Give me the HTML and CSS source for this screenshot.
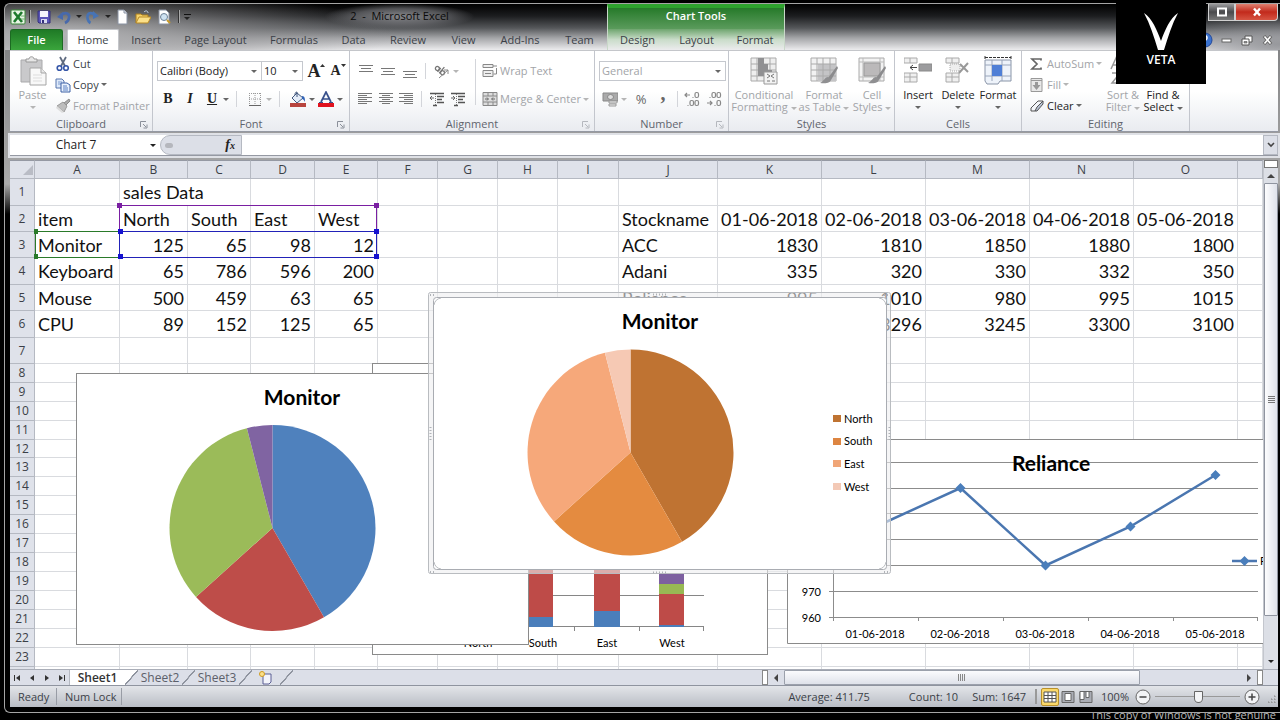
FILE: index.html
```html
<!DOCTYPE html>
<html lang="en">
<head>
<meta charset="utf-8">
<title>2 - Microsoft Excel</title>
<link rel="stylesheet" href="styles.css">
</head>
<body>
<div class="window">
  <header class="titlebar">
    <div class="qat">
      <svg class="i16" viewBox="0 0 16 16"><rect x="1" y="1" width="14" height="14" rx="1" fill="#e9f5e6" stroke="#3b8a3b"/><path d="M4 3l8 10M12 3L4 13" stroke="#1d7a2c" stroke-width="2.6"/><path d="M11 7h4M11 10h4" stroke="#6ab06a"/></svg>
      <span class="bar"></span>
      <button aria-label="Save"><svg class="i16" viewBox="0 0 16 16"><path d="M2 2h12v12H3l-1-1z" fill="#5a55b8" stroke="#34307c"/><path d="M4 2h8v6H4z" fill="#f4f5fc"/><path d="M5 10h6v4H5z" fill="#d8daf0"/><path d="M6 11h2v3H6z" fill="#34307c"/></svg></button>
      <button class="wide" aria-label="Undo"><svg class="i16" viewBox="0 0 16 16"><path d="M5 6c5-4 9-1 8 3-.3 2-2 4-4 5" fill="none" stroke="#4869ab" stroke-width="2.6"/><path d="M1 8l6-5v8z" fill="#4869ab"/></svg><i class="arr dark"></i></button>
      <button class="wide" aria-label="Redo"><svg class="i16" viewBox="0 0 16 16"><path d="M10 6C5 2 2 5 2.500 9c.3 2 1 4 3 5" fill="none" stroke="#4773b4" stroke-width="2.600"/><path d="M14 7L8 2v8z" fill="#4773b4"/></svg><i class="arr dark"></i></button>
      <button aria-label="New"><svg class="i16" viewBox="0 0 16 16"><path d="M4 1h6l3 3v11H4z" fill="#fff" stroke="#8a93a3"/><path d="M10 1v3h3" fill="#dfe4ec" stroke="#8a93a3"/></svg></button>
      <button aria-label="Open"><svg class="i16" viewBox="0 0 16 16"><path d="M1 14V5h5l1 1h6v3" fill="#f5d26b" stroke="#a97c1c"/><path d="M1 14l3-6h12l-3 6z" fill="#fbe08a" stroke="#b98a25"/><path d="M9 3c2-2 4-1 4 1" fill="none" stroke="#c5d6ee"/></svg></button>
      <button aria-label="Print Preview"><svg class="i16" viewBox="0 0 16 16"><path d="M3 1h7l3 3v11H3z" fill="#fff" stroke="#8a93a3"/><circle cx="8" cy="8" r="3.500" fill="#cfe3f2" stroke="#6d8196"/><path d="M11 11l3 3" stroke="#c79a2a" stroke-width="2"/></svg></button>
      <span class="bar"></span>
      <button class="more" aria-label="Customize"><i class="line"></i><i class="arr dark"></i></button>
    </div>
    <h1>2  -  Microsoft Excel</h1>
    <div class="context">Chart Tools</div>
    <div class="winbtns">
      <button aria-label="Restore"><svg viewBox="0 0 14 10"><path d="M3 1.500h8v7H3z" fill="none" stroke="#fff" stroke-width="2"/></svg></button>
      <button class="close" aria-label="Close"><svg viewBox="0 0 14 10"><path d="M4 1.500l6 7M10 1.500l-6 7" stroke="#fff" stroke-width="2.400"/></svg></button>
    </div>
  </header>

  <nav class="tabs">
    <div class="main-tabs">
      <button class="file">File</button><button class="home">Home</button><button>Insert</button><button>Page Layout</button><button>Formulas</button><button>Data</button><button>Review</button><button>View</button><button>Add-Ins</button><button>Team</button>
    </div>
    <div class="context-tabs"><button>Design</button><button>Layout</button><button>Format</button></div>
    <div class="mdi">
      <button aria-label="Help"><svg class="i16" viewBox="0 0 16 16"><circle cx="8" cy="8" r="7" fill="#3a72cf" stroke="#23489a"/><path d="M6 6c0-3 4-3 4 0 0 2-2 1.500-2 4M8 11v2" stroke="#fff" fill="none" stroke-width="1.500"/></svg></button>
      <button aria-label="Minimize workbook"><svg class="i16" viewBox="0 0 16 16"><rect x="4" y="7" width="9" height="3" fill="#fff" stroke="#666"/></svg></button>
      <button aria-label="Restore workbook"><svg class="i16" viewBox="0 0 16 16"><path d="M6 4h7v6H6z" fill="#fff" stroke="#555"/><path d="M3 7h7v6H3z" fill="#fff" stroke="#555"/><path d="M5 9.500h3v1.500H5z" fill="#999" stroke="#555" stroke-width=".6"/></svg></button>
      <button aria-label="Close workbook"><svg class="i16" viewBox="0 0 16 16"><path d="M4 4l7 8M11 4l-7 8" stroke="#666" stroke-width="3.400"/><path d="M4.500 4.500l6 7M10.500 4.500l-6 7" stroke="#fff" stroke-width="1.600"/></svg></button>
    </div>
  </nav>

  <div class="ribbon">
    <section class="group clipboard">
      <div class="body">
        <button class="big off"><svg viewBox="0 0 28 30"><path d="M2 4h21v22H2z" fill="#c9c9cb" stroke="#a9a9ab"/><path d="M7 6V3h3c0-3 5-3 5 0h3v3z" fill="#e6e6e6" stroke="#999"/><path d="M11 12h11l5 5v12H11z" fill="#f8f8f8" stroke="#a5a5a5"/><path d="M22 12v5h5" fill="#e8e8e8" stroke="#a5a5a5"/><path d="M14 19h9M14 22h9M14 25h9" stroke="#ddd"/></svg><span>Paste</span><i class="arr"></i></button>
        <div class="stack">
          <button><svg class="i16" viewBox="0 0 16 16"><path d="M5 1l5 9M11 1L6 10" stroke="#5f6b80" stroke-width="1.800"/><circle cx="4.500" cy="12" r="2.300" fill="none" stroke="#3556a8" stroke-width="1.600"/><circle cx="11" cy="12" r="2.300" fill="none" stroke="#3556a8" stroke-width="1.600"/></svg>Cut</button>
          <button><svg class="i16" viewBox="0 0 16 16"><path d="M1 2h6l2 2v7H1z" fill="#dfeafa" stroke="#5674ad"/><path d="M3 5h4M3 7h4" stroke="#7d9bd0"/><path d="M6 6h6l3 2v7H6z" fill="#e9f1fc" stroke="#3d60a5"/><path d="M8 9h4M8 11h5M8 13h5" stroke="#5b80c4"/></svg>Copy <i class="arr"></i></button>
          <button class="off"><svg class="i16" viewBox="0 0 16 16"><path d="M14 1l1 2-4 4-2-2z" fill="#aaa" stroke="#8d8d8d"/><path d="M8 4l4 4-3 6-7-6z" fill="#bdbdbd" stroke="#999"/><path d="M2 8l7 6-2 1-6-5z" fill="#ddd"/></svg>Format Painter</button>
        </div>
      </div>
      <h2>Clipboard<svg class="launch" viewBox="0 0 8 8"><path d="M.5 6V.5H6M3 3l3 3M7 3.500V7H3.500" fill="none" stroke="#8b909a"/></svg></h2>
    </section>

    <section class="group font">
      <div class="body rows">
        <div class="row">
          <button class="combo fname"><span>Calibri (Body)</span><i class="arr"></i></button><button class="combo fsize"><span>10</span><i class="arr"></i></button>
          <button class="tool grow"><b class="serif big-a">A</b><svg class="tick" viewBox="0 0 5 4"><path d="M0 3l2.500-3L5 3z" fill="#333"/></svg></button><button class="tool shrink"><b class="serif small-a">A</b><svg class="tick" viewBox="0 0 5 4"><path d="M0 0l2.500 3L5 0z" fill="#333"/></svg></button>
        </div>
        <div class="row">
          <button class="tool"><b class="serif">B</b></button><button class="tool"><b class="serif"><em>I</em></b></button><button class="tool"><b class="serif under">U</b></button><i class="arr"></i>
          <span class="sep"></span>
          <button class="tool bord off"><svg class="i16" viewBox="0 0 16 16"><path d="M2 2.500h12M2 8h12M2.500 2v12M8 2v12M13.500 2v12" stroke="#999" stroke-dasharray="1 1"/><path d="M2 14.500h12" stroke="#666"/></svg></button><i class="arr pale"></i>
          <span class="sep"></span>
          <button class="tool"><svg class="i16" viewBox="0 0 16 16"><path d="M7 2l6 5-6 5-5-5z" fill="#e4ecf8" stroke="#43597f"/><path d="M7 6V1c-2 0-2 2-2 3" fill="none" stroke="#43597f"/><path d="M12 5c3 0 3 3 3 6-1-2-2-3-3-3z" fill="#2f62b5"/><path d="M0 12h16v4H0z" fill="#b8453f"/></svg></button><i class="arr"></i>
          <button class="tool"><svg class="i16" viewBox="0 0 16 16"><path d="M3 11L8 1l5 10M5 8h6" fill="none" stroke="#39518c" stroke-width="1.700"/><path d="M1 11.500h4M11 11.500h4" stroke="#39518c"/><path d="M0 12h16v4H0z" fill="#e0121e"/></svg></button><i class="arr"></i>
        </div>
      </div>
      <h2>Font<svg class="launch" viewBox="0 0 8 8"><path d="M.5 6V.5H6M3 3l3 3M7 3.500V7H3.500" fill="none" stroke="#8b909a"/></svg></h2>
    </section>

    <section class="group align">
      <div class="body">
        <div class="rows">
          <div class="row">
            <button class="tool"><svg class="i16" viewBox="0 0 16 16"><path d="M1 2.500h14M3 5.500h10M1 8.500h14" stroke="#777"/></svg></button><button class="tool"><svg class="i16" viewBox="0 0 16 16"><path d="M1 5.500h14M3 8.500h10M1 11.500h14" stroke="#777"/></svg></button><button class="tool"><svg class="i16" viewBox="0 0 16 16"><path d="M1 8.500h14M3 11.500h10M1 14.500h14" stroke="#777"/></svg></button>
            <span class="sep"></span>
            <button class="tool off"><svg class="i16" viewBox="0 0 16 16"><g transform="rotate(40 6 7)" fill="none" stroke="#777" stroke-width="1.300"><circle cx="3" cy="7.500" r="2"/><path d="M5.300 5v5M7.500 2v8"/><circle cx="9.700" cy="7.500" r="2"/></g><path d="M5 15L14 7M10 7h4v4" fill="none" stroke="#888"/></svg></button><i class="arr pale"></i>
          </div>
          <div class="row">
            <button class="tool"><svg class="i16" viewBox="0 0 16 16"><path d="M1 2.500h14M1 4.500h9M1 6.500h14M1 8.500h9M1 10.500h14M1 12.500h9" stroke="#777"/></svg></button><button class="tool"><svg class="i16" viewBox="0 0 16 16"><path d="M1 2.500h14M4 4.500h8M1 6.500h14M4 8.500h8M1 10.500h14M4 12.500h8" stroke="#777"/></svg></button><button class="tool"><svg class="i16" viewBox="0 0 16 16"><path d="M1 2.500h14M6 4.500h9M1 6.500h14M6 8.500h9M1 10.500h14M6 12.500h9" stroke="#777"/></svg></button>
            <span class="sep"></span>
            <button class="tool"><svg class="i16" viewBox="0 0 16 16"><path d="M1 2.500h14M8 5.500h7M8 8.500h5M8 11.500h7M4 14.500h4" stroke="#555" stroke-width="1.500"/><path d="M6.500 3v12" stroke="#777" stroke-dasharray="1 1"/><path d="M5 7H1M3 5L1 7l2 2" fill="none" stroke="#666"/></svg></button><button class="tool"><svg class="i16" viewBox="0 0 16 16"><path d="M1 2.500h14M8 5.500h7M8 8.500h5M8 11.500h7M4 14.500h4" stroke="#555" stroke-width="1.500"/><path d="M6.500 3v12" stroke="#777" stroke-dasharray="1 1"/><path d="M1 7h4M3 5l2 2-2 2" fill="none" stroke="#666"/></svg></button>
          </div>
        </div>
        <span class="sep tall"></span>
        <div class="rows">
          <button class="row wide-tool off"><svg class="i16" viewBox="0 0 16 16"><path d="M1 1.500h10v3H1zM1 7.500h10v6H1z" fill="#eee" stroke="#888"/><path d="M3 10.500h6M11 3h4M14.500 5v6h-3" stroke="#888" fill="none"/></svg>Wrap Text</button>
          <button class="row wide-tool off"><svg class="i16" viewBox="0 0 16 16"><path d="M1 1.500h14v13H1zM1 5h14M1 11h14M6 1.500V5M11 1.500V5M6 11v3.500M11 11v3.500" fill="#ddd" stroke="#888"/><path d="M3 8h3M13 8h-3M5 6.500L6.500 8 5 9.500M11 6.500L9.500 8 11 9.500" stroke="#666" fill="none"/></svg>Merge &amp; Center <i class="arr pale"></i></button>
        </div>
      </div>
      <h2>Alignment<svg class="launch" viewBox="0 0 8 8"><path d="M.5 6V.5H6M3 3l3 3M7 3.500V7H3.500" fill="none" stroke="#b5b8be"/></svg></h2>
    </section>

    <section class="group number">
      <div class="body rows">
        <div class="row"><button class="combo format off"><span>General</span><i class="arr"></i></button></div>
        <div class="row">
          <button class="tool"><svg class="i16" viewBox="0 0 16 16"><path d="M1 2h15v8H1z" fill="#aaa" stroke="#888"/><ellipse cx="8.500" cy="6" rx="3" ry="2.500" fill="#ddd" stroke="#888"/><path d="M7 10h8v2H7zM7 13h7v2H7z" fill="#eee" stroke="#999"/></svg></button><i class="arr pale"></i>
          <button class="tool pct">%</button><button class="tool comma">,</button><span class="sep"></span>
          <button class="tool dec"><svg class="i16" viewBox="0 0 16 16"><g fill="none" stroke="#888" stroke-width="1.200"><rect x="11" y="1.500" width="3.500" height="5" rx="1.500"/><rect x="6" y="9.500" width="3.500" height="5" rx="1.500"/><rect x="11" y="9.500" width="3.500" height="5" rx="1.500"/><path d="M8.500 6.500h1M3.500 14.500h1M1 4h5M3 2L1 4l2 2"/></g></svg></button><button class="tool dec"><svg class="i16" viewBox="0 0 16 16"><g fill="none" stroke="#888" stroke-width="1.200"><rect x="6" y="1.500" width="3.500" height="5" rx="1.500"/><rect x="11" y="1.500" width="3.500" height="5" rx="1.500"/><rect x="11" y="9.500" width="3.500" height="5" rx="1.500"/><path d="M3.500 6.500h1M8.500 14.500h1M1 12h5M4 10l2 2-2 2"/></g></svg></button>
        </div>
      </div>
      <h2>Number<svg class="launch" viewBox="0 0 8 8"><path d="M.5 6V.5H6M3 3l3 3M7 3.500V7H3.500" fill="none" stroke="#b5b8be"/></svg></h2>
    </section>

    <section class="group styles">
      <div class="body">
        <button class="big off w68"><svg viewBox="0 0 28 30"><path d="M1 2h25v23H1z" fill="#eee" stroke="#aaa"/><path d="M1 8h25M1 14h25M1 20h25M7 2v23M20 2v23" stroke="#aaa"/><path d="M8 2h6v6h4v6h4v6H8z" fill="#909092"/><path d="M14 16h13v12H14z" fill="#f3f3f3" stroke="#999"/><path d="M17 18l3 2-3 2M24 18l-3 2 3 2M17 25h3M22 25h3" fill="none" stroke="#777"/></svg><span>Conditional<br>Formatting <i class="arr pale"></i></span></button>
        <button class="big off w52"><svg viewBox="0 0 28 30"><path d="M1 2h25v23H1z" fill="#f2f2f2" stroke="#aaa"/><path d="M8 8h18v17H8z" fill="#c4c4c6"/><path d="M1 8h25M1 14h25M1 20h25M7 2v23M13 2v23M20 2v23" stroke="#aaa"/><path d="M27 10l-9 12 3 2 7-12z" fill="#8b8b8d"/><path d="M18 21c-3 0-3 3-8 6 6 1 11 0 11-4z" fill="#8f8f91"/></svg><span>Format<br>as Table <i class="arr pale"></i></span></button>
        <button class="big off w44"><svg viewBox="0 0 28 30"><path d="M1 2h25v23H1z" fill="#f2f2f2" stroke="#aaa"/><path d="M1 6h25M1 21h25M5 2v23M22 2v23" stroke="#bbb"/><path d="M6 7h16v13H6z" fill="#bbb9ba" stroke="#999"/><path d="M27 10l-9 12 3 2 7-12z" fill="#8b8b8d"/><path d="M18 21c-3 0-3 3-8 6 6 1 11 0 11-4z" fill="#8f8f91"/></svg><span>Cell<br>Styles <i class="arr pale"></i></span></button>
      </div>
      <h2>Styles</h2>
    </section>

    <section class="group cells">
      <div class="body">
        <button class="big w40"><svg viewBox="0 0 28 30"><path d="M0 2h13v5H0zM0 17h13v9H0zM6 2v5M6 17v9M0 21h13" fill="#f0f0f0" stroke="#aaa"/><path d="M15 8h13v7H15z" fill="#9c9c9e" stroke="#8a8a8a"/><path d="M13 11.500H6M9 9l-3 2.500L9 14" fill="none" stroke="#444"/></svg><span>Insert</span><i class="arr"></i></button>
        <button class="big w40"><svg viewBox="0 0 28 30"><path d="M2 2h13v5H2zM2 17h13v9H2zM8 2v5M8 17v9M2 21h13" fill="#f0f0f0" stroke="#aaa"/><path d="M6 8h10v7H6z" fill="#eee" stroke="#aaa" stroke-dasharray="1 1"/><path d="M16 8l8 8M24 7l-9 10" stroke="#999" stroke-width="2"/></svg><span>Delete</span><i class="arr"></i></button>
        <button class="big w40"><svg viewBox="0 0 28 30"><path d="M1 4h26v21H16l-2 3H3l-2-3z" fill="#eef3fa" stroke="#8a95a8"/><path d="M1 9h26M1 20h26M8 4v21M18 4v21" stroke="#9aa6bb"/><path d="M8 9h10v11H8z" fill="#4f7fd6"/><path d="M1 1.500h26M1 0v4M27 0v4" stroke="#333" stroke-dasharray="3 1"/></svg><span>Format</span><i class="arr"></i></button>
      </div>
      <h2>Cells</h2>
    </section>

    <section class="group editing">
      <div class="body">
        <div class="stack">
          <button class="off"><svg class="i16" viewBox="0 0 16 16"><path d="M12 4.500V3H3l5 5-5 5h9v-1.500" fill="none" stroke="#666" stroke-width="1.700"/></svg>AutoSum <i class="arr pale"></i></button>
          <button class="off"><svg class="i16" viewBox="0 0 16 16"><path d="M2 1.500h11v13H2z" fill="#e8e8e8" stroke="#999"/><path d="M6 5h3v3h2.500l-4 5-4-5H6z" fill="#999"/><path d="M2 3.500h11" stroke="#999"/></svg>Fill <i class="arr pale"></i></button>
          <button><svg class="i16" viewBox="0 0 16 16"><path d="M2 10L9 3h5l-6 8-2 2H2z" fill="#f4f6fa" stroke="#555"/><path d="M6 13l2-4 6-6v3l-6 7z" fill="#b9c3d6" stroke="#555"/></svg>Clear <i class="arr"></i></button>
        </div>
        <button class="big off w40"><svg viewBox="0 0 28 30"><path d="M2 13L7 2l5 11M4 9h6M3 17h8L3 27h9" fill="none" stroke="#999" stroke-width="1.500"/><path d="M15 4h12l-4 8v10h-3V12z" fill="#ccc" stroke="#999"/></svg><span>Sort &amp;<br>Filter <i class="arr pale"></i></span></button>
        <button class="big w40"><svg viewBox="0 0 28 30"><path d="M4 4h8v20H4zM16 4h8v20h-8zM12 8h4v8h-4z" fill="#4a5a78"/></svg><span>Find &amp;<br>Select <i class="arr"></i></span></button>
      </div>
      <h2>Editing</h2>
    </section>
  </div>

  <div class="formula">
    <button class="namebox"><span>Chart 7</span><i class="arr dark"></i></button>
    <div class="fx"><i class="knob"></i><em>f<small>x</small></em></div>
    <input class="finput" type="text" aria-label="Formula bar">
    <button class="expand" aria-label="Expand formula bar"><svg viewBox="0 0 10 8"><path d="M2 2l3 3 3-3" fill="none" stroke="#444" stroke-width="1.600"/></svg></button>
  </div>

  <div class="work">
    <main class="sheet">
      <table>
        <colgroup><col class="c-head"><col class="c-a"><col class="c-b"><col class="c-c"><col class="c-d"><col class="c-c"><col class="c-f"><col class="c-f"><col class="c-f"><col class="c-i"><col class="c-j"><col class="c-k"><col class="c-k"><col class="c-k"><col class="c-k"><col class="c-k"><col></colgroup>
        <thead><tr><th class="corner"><svg viewBox="0 0 12 12"><path d="M11 1v10H1z" fill="#b9bcc5"/></svg></th><th>A<th>B<th>C<th>D<th>E<th>F<th>G<th>H<th>I<th>J<th>K<th>L<th>M<th>N<th>O<th></tr></thead>
        <tbody>
          <tr class="t27"><th>1<td><td colspan="2">sales Data<td><td><td><td> <td><td><td><td> <td><td><td><td> <td></tr>
          <tr class="t26"><th>2<td>item<td>North<td>South<td>East<td>West<td><td><td><td><td>Stockname<td class="n">01-06-2018<td class="n">02-06-2018<td class="n">03-06-2018<td class="n">04-06-2018<td class="n">05-06-2018<td></tr>
          <tr class="t26"><th>3<td>Monitor<td class="n">125<td class="n">65<td class="n">98<td class="n">12<td><td><td><td><td>ACC<td class="n">1830<td class="n">1810<td class="n">1850<td class="n">1880<td class="n">1800<td></tr>
          <tr class="t27"><th>4<td>Keyboard<td class="n">65<td class="n">786<td class="n">596<td class="n">200<td><td><td><td><td>Adani<td class="n">335<td class="n">320<td class="n">330<td class="n">332<td class="n">350<td></tr>
          <tr class="t26"><th>5<td>Mouse<td class="n">500<td class="n">459<td class="n">63<td class="n">65<td><td><td><td><td>Reliance<td class="n">995<td class="n">1010<td class="n">980<td class="n">995<td class="n">1015<td></tr>
          <tr class="t27"><th>6<td>CPU<td class="n">89<td class="n">152<td class="n">125<td class="n">65<td><td><td><td><td><td><td class="n">3296<td class="n">3245<td class="n">3300<td class="n">3100<td></tr>
          <tr class="t26"><th>7<td><td><td><td> <td><td><td><td> <td><td><td><td> <td><td><td><td></tr>
          <tr><th>8<td><td><td><td> <td><td><td><td> <td><td><td><td> <td><td><td><td></tr>
          <tr><th>9<td><td><td><td> <td><td><td><td> <td><td><td><td> <td><td><td><td></tr>
          <tr><th>10<td><td><td><td> <td><td><td><td> <td><td><td><td> <td><td><td><td></tr>
          <tr><th>11<td><td><td><td> <td><td><td><td> <td><td><td><td> <td><td><td><td></tr>
          <tr class="t18"><th>12<td><td><td><td> <td><td><td><td> <td><td><td><td> <td><td><td><td></tr>
          <tr><th>13<td><td><td><td> <td><td><td><td> <td><td><td><td> <td><td><td><td></tr>
          <tr><th>14<td><td><td><td> <td><td><td><td> <td><td><td><td> <td><td><td><td></tr>
          <tr><th>15<td><td><td><td> <td><td><td><td> <td><td><td><td> <td><td><td><td></tr>
          <tr><th>16<td><td><td><td> <td><td><td><td> <td><td><td><td> <td><td><td><td></tr>
          <tr><th>17<td><td><td><td> <td><td><td><td> <td><td><td><td> <td><td><td><td></tr>
          <tr><th>18<td><td><td><td> <td><td><td><td> <td><td><td><td> <td><td><td><td></tr>
          <tr><th>19<td><td><td><td> <td><td><td><td> <td><td><td><td> <td><td><td><td></tr>
          <tr><th>20<td><td><td><td> <td><td><td><td> <td><td><td><td> <td><td><td><td></tr>
          <tr><th>21<td><td><td><td> <td><td><td><td> <td><td><td><td> <td><td><td><td></tr>
          <tr><th>22<td><td><td><td> <td><td><td><td> <td><td><td><td> <td><td><td><td></tr>
          <tr><th>23<td><td><td><td> <td><td><td><td> <td><td><td><td> <td><td><td><td></tr>
          <tr><th><td><td><td><td> <td><td><td><td> <td><td><td><td> <td><td><td><td></tr>
        </tbody>
      </table>

      <svg class="float ranges" viewBox="32 200 350 62">
        <path d="M119.500 205.500H376.500V231.500" fill="none" stroke="#7a1fa2"/><path d="M119.500 205.500v26" stroke="#7a1fa2"/>
        <path d="M35.500 231.500h84M35.500 257.500h84M35.500 231v26" stroke="#2a7a2a"/>
        <path d="M119.500 231.500h257v26h-257z" fill="none" stroke="#2222b8"/>
        <path d="M117 203h5v5h-5zM374 203h5v5h-5z" fill="#7a1fa2"/>
        <path d="M34 229h4v5h-4zM34 254h4v5h-4z" fill="#2a7a2a"/>
        <path d="M118 229h5v5h-5zM374 229h5v5h-5zM118 254h5v5h-5zM374 254h5v5h-5z" fill="#1512d0"/>
      </svg>

      <svg class="float chart-bars" viewBox="372 363 396 292">
        <rect x="372.500" y="363.500" width="395" height="291" fill="#fff" stroke="#8a8a8a"/>
        <path d="M440 595.500h264M440 626.500h264M574.500 626v5M639.500 626v5M703.500 626v5" stroke="#868686"/>
        <path d="M527 500h26v117h-26zM594 500h26v111h-26zM659 594h25v31h-25z" fill="#be4b48"/>
        <path d="M527 617h26v10h-26zM594 611h26v16h-26zM659 625h25v2h-25z" fill="#4a7ebb"/>
        <path d="M659 584h25v10h-25z" fill="#98b954"/><path d="M659 573h25v11h-25z" fill="#7d60a0"/>
        <text x="478" y="647" text-anchor="middle">North</text><text x="543" y="647" text-anchor="middle">South</text><text x="607" y="647" text-anchor="middle">East</text><text x="672" y="647" text-anchor="middle">West</text>
      </svg>

      <svg class="float chart-pie" viewBox="76 373 454 272">
        <rect x="76.500" y="373.500" width="452" height="271" fill="#fff" stroke="#8a8a8a"/>
        <text class="ctitle" x="302" y="405" text-anchor="middle">Monitor</text>
        <g transform="translate(272.500 528)"><path d="M0 0V-103A103 103 0 0 1 51.500 89.200z" fill="#4f81bd"/><path d="M0 0L51.500 89.200A103 103 0 0 1-76.500 68.900z" fill="#be4d49"/><path d="M0 0L-76.500 68.900A103 103 0 0 1-25.600-99.800z" fill="#9bbb59"/><path d="M0 0L-25.600-99.800A103 103 0 0 1 0-103z" fill="#8064a2"/></g>
      </svg>

      <svg class="float chart-line" viewBox="787 439 476 205">
        <path d="M1270 439.500H787.500v204H1270z" fill="#fff" stroke="#8a8a8a"/>
        <path d="M829 462.500h429M829 488.500h429M829 513.500h429M829 539.500h429M829 565.500h429M829 591.500h429M829 617.500h429M833.500 462v159M918.500 617v4M1003.500 617v4M1088.500 617v4M1173.500 617v4M1257.500 617v4" stroke="#8c8c8c"/>
        <path d="M875 527L960.500 488l85 77.500 85-39 85-51.500M1232 561h25" fill="none" stroke="#4a76b0" stroke-width="2.500"/>
        <path d="M960.500 483l5 5-5 5-5-5zM1045.500 560.500l5 5-5 5-5-5zM1130.500 521.500l5 5-5 5-5-5zM1215.500 470l5 5-5 5-5-5zM1244.500 556l5 5-5 5-5-5z" fill="#4a7ebb"/>
        <text class="ctitle" x="1051" y="471" text-anchor="middle">Reliance</text>
        <text x="821" y="596" text-anchor="end">970</text><text x="821" y="622" text-anchor="end">960</text>
        <text x="875" y="638" text-anchor="middle">01-06-2018</text><text x="960" y="638" text-anchor="middle">02-06-2018</text><text x="1045" y="638" text-anchor="middle">03-06-2018</text><text x="1130" y="638" text-anchor="middle">04-06-2018</text><text x="1215" y="638" text-anchor="middle">05-06-2018</text>
        <text x="1260" y="565">Reliance</text>
      </svg>

      <svg class="float chart-active" viewBox="428 292 464 283">
        <rect x="428.500" y="292.500" width="462" height="281" rx="2" fill="#eeeef0" fill-opacity=".6" stroke="#b9bcc0"/>
        <rect x="433.500" y="297.500" width="453" height="272" rx="3" fill="#fff" stroke="#a9acb2"/>
        <path d="M434 305q1-6 7-7M879 298q6 1 7 7M434 562q1 6 7 7M879 569q6-1 7-7" fill="none" stroke="#b9bcc0"/>
        <path d="M430.500 427v14M889.500 427v14M653 294.500h14M653 572.500h14M430 295h5M430 572h5M884 295h5M884 572h5" stroke="#b0b3b8" stroke-dasharray="1 2" stroke-width="2"/>
        <text class="ctitle" x="660" y="329" text-anchor="middle">Monitor</text>
        <g transform="translate(630.500 452.500)"><path d="M0 0V-103A103 103 0 0 1 51.500 89.200z" fill="#bf7332"/><path d="M0 0L51.500 89.200A103 103 0 0 1-76.500 68.900z" fill="#e48b40"/><path d="M0 0L-76.500 68.900A103 103 0 0 1-25.600-99.800z" fill="#f6a87a"/><path d="M0 0L-25.600-99.800A103 103 0 0 1 0-103z" fill="#f6c9b4"/></g>
        <path d="M833 415h8v7h-8z" fill="#bf7332"/><path d="M833 438h8v7h-8z" fill="#dd8541"/><path d="M833 460h8v7h-8z" fill="#f0a577"/><path d="M833 483h8v7h-8z" fill="#f3c9b6"/>
        <text x="844" y="423">North</text><text x="844" y="445">South</text><text x="844" y="468">East</text><text x="844" y="491">West</text>
      </svg>
    </main>
    <div class="vscroll">
      <i class="vsplit"></i><button aria-label="Scroll up"><i class="arr up"></i></button><div class="vtrack"><div class="vthumb"><i class="grip"></i></div></div><button aria-label="Scroll down"><i class="arr dark"></i></button>
    </div>
  </div>

  <div class="bottom">
    <div class="sheetnav"><button aria-label="First sheet"><svg viewBox="0 0 8 8"><path d="M1.500 1v6" stroke="#333"/><path d="M7 1v6L3 4z" fill="#333"/></svg></button><button aria-label="Previous sheet"><svg viewBox="0 0 8 8"><path d="M6 1v6L2 4z" fill="#333"/></svg></button><button aria-label="Next sheet"><svg viewBox="0 0 8 8"><path d="M2 1v6l4-3z" fill="#333"/></svg></button><button aria-label="Last sheet"><svg viewBox="0 0 8 8"><path d="M1 1v6l4-3z" fill="#333"/><path d="M6.500 1v6" stroke="#333"/></svg></button></div>
    <button class="stab on">Sheet1</button><i class="slash first"></i><button class="stab">Sheet2</button><i class="slash"></i><button class="stab">Sheet3</button><i class="slash"></i>
    <button class="stab add" aria-label="Insert worksheet"><svg class="i16" viewBox="0 0 16 16"><path d="M5 4h8v8l-2 2H5z" fill="#f3f4fb" stroke="#5a5f94"/><circle cx="4" cy="4" r="2.500" fill="#fbe08a" stroke="#d09a20"/></svg></button><i class="slash"></i>
    <div class="hscroll"><i class="hsplit"></i><button aria-label="Scroll left"><svg viewBox="0 0 8 8"><path d="M6 0v8L2 4z" fill="#444"/></svg></button><div class="htrack"><div class="hthumb"><i class="grip"></i></div></div><button aria-label="Scroll right"><svg viewBox="0 0 8 8"><path d="M2 0v8l4-4z" fill="#444"/></svg></button><i class="hsplit"></i></div>
  </div>

  <footer class="status">
    <span class="cell ready">Ready</span><span class="cell lock">Num Lock</span>
    <div class="stats"><span>Average: 411.75</span><span>Count: 10</span><span>Sum: 1647</span></div>
    <span class="bar2"></span>
    <div class="views">
      <button class="on" aria-label="Normal"><svg class="i16" viewBox="0 0 16 16"><path d="M2 3h12v10H2zM2 6.500h12M2 9.500h12M6 3v10M10 3v10" fill="#fff" stroke="#555"/></svg></button><button aria-label="Page Layout view"><svg class="i16" viewBox="0 0 16 16"><path d="M2 2.500h12v11H2z" fill="#aaadb5" stroke="#666"/><path d="M5 4.500h6v7H5z" fill="#fff" stroke="#666"/></svg></button><button aria-label="Page Break view"><svg class="i16" viewBox="0 0 16 16"><path d="M2 2.500h12v11H2z" fill="#aaadb5" stroke="#666"/><path d="M2 2.500h4v8H2zM8 2.500h3v6H8z" fill="#fff" stroke="#666"/></svg></button>
    </div>
    <span class="pct100">100%</span>
    <button class="round" aria-label="Zoom out"><svg viewBox="0 0 16 16"><circle cx="8" cy="8" r="7" fill="#f2f3f5" stroke="#666"/><path d="M4.500 8h7" stroke="#444" stroke-width="1.500"/></svg></button>
    <input class="zoom" type="range" min="0" max="100" value="51" aria-label="Zoom">
    <button class="round" aria-label="Zoom in"><svg viewBox="0 0 16 16"><circle cx="8" cy="8" r="7" fill="#f2f3f5" stroke="#666"/><path d="M4.500 8h7M8 4.500v7" stroke="#444" stroke-width="1.500"/></svg></button>
    <svg class="sizer" viewBox="0 0 10 10"><path d="M8 1h1v1M5 4h1v1M8 4h1v1M2 7h1v1M5 7h1v1M8 7h1v1" stroke="#888" fill="none"/></svg>
  </footer>
</div>
<div class="genuine"><p>This copy of Windows is not genuine</p></div>
<div class="logo"><svg viewBox="0 0 36 40"><path d="M1 1C9 6 14 18 18 29 22 18 27 6 35 1 29 12 25 25 21 38h-6C11 25 7 12 1 1z" fill="#fff"/></svg><span>VETA</span></div>
</body>
</html>
```

FILE: styles.css
```css
* { box-sizing: border-box; }
html, body { margin: 0; height: 100%; }
body {
  background: #000; overflow: hidden; display: flex; flex-direction: column; position: relative;
  font: 11px/14px "Open Sans", "Noto Sans", sans-serif; color: #3b3f47;
}
button { font: inherit; color: inherit; background: none; border: 0; padding: 0; margin: 0; }
h1, h2, p { margin: 0; font-size: 11px; font-weight: 400; }
svg { display: block; flex: none; }
.i16 { width: 16px; height: 16px; }

.arr { display: inline-block; border: 3px solid transparent; border-top-color: #666; border-bottom: 0; vertical-align: middle; flex: none; }
.arr.dark { border-top-color: #222; }
.arr.pale { border-top-color: #b5b5b5; }
.arr.up { border: 4px solid transparent; border-bottom-color: #444; border-top: 0; }

.window {
  flex: 1; min-height: 0; display: flex; flex-direction: column;
  margin: 3px 0 0 4px; padding: 0 2px 5px 5px; border: 1px solid #a5a5a5; border-right: 0; border-radius: 6px 0 0 6px;
  background:
    radial-gradient(ellipse 340px 46px at 50px 30px, #b5b5b7, rgba(150,150,152,.6) 50%, rgba(150,150,152,0)) no-repeat 0 0 / 100% 46px,
    radial-gradient(ellipse 120px 30px at 100% 40px, #97989c, rgba(150,150,152,0)) no-repeat 0 0 / 100% 46px,
    linear-gradient(#000 0, #1c1d1f 12px, #55575a 24px, #a4a5a8 34px, #ececee 46px) no-repeat 0 0 / 100% 46px,
    linear-gradient(#77787a 0, #aaa 180px, #000 210px);
}

.titlebar { height: 25px; display: grid; grid-template-columns: 182px 415px 178px 1fr; }
.qat { display: flex; align-items: center; }
.qat button { width: 22px; display: flex; align-items: center; justify-content: center; }
.qat .wide { width: 30px; gap: 4px; }
.qat .bar { width: 2px; height: 13px; border-left: 1px solid #333; border-right: 1px solid #aaa; margin: 0 3px; }
.qat .more { width: 10px; flex-direction: column; gap: 2px; }
.qat .line { width: 7px; height: 1px; background: #111; }
.titlebar h1 {
  text-align: center; line-height: 23px; color: #0a0a0a; white-space: pre;
  background: radial-gradient(ellipse 75px 13px at 50% 50%, #85868a, rgba(110,111,115,.7) 60%, rgba(90,90,94,0));
}
.context {
  text-align: center; font-weight: 600; color: #fff; border: 1px solid #c9d8c9; border-top: 4px solid #2ea32e; border-bottom: 0;
  line-height: 16px; background: linear-gradient(#267a2a, #5b9b5c);
}
.winbtns { display: flex; justify-content: flex-end; height: 17px; }
.winbtns button { width: 27px; border: 1px solid #d0d0d0; border-top: 0; background: linear-gradient(#9a9a9c, #4a4a4c 50%, #777); display: grid; place-items: center; }
.winbtns .close { width: 43px; border-radius: 0 0 4px 0; background: linear-gradient(#e08070, #c22a1c 50%, #d65442); }
.winbtns svg { width: 14px; height: 10px; }

.tabs { height: 21px; display: grid; grid-template-columns: 597px 178px 1fr; }
.main-tabs { display: grid; grid-template-columns: 53px 56px 54px 85px 72px 47px 62px 49px 64px 55px; }
.tabs button { line-height: 21px; }
.main-tabs .file { background: linear-gradient(#1f7a26, #3aa53c); color: #fff; font-weight: 600; border-radius: 3px 3px 0 0; border: 1px solid #1c6a22; border-bottom: 0; line-height: 20px; }
.main-tabs .home { margin-left: 4px; background: #fff; border: 1px solid #c4c6ca; border-bottom: 0; border-radius: 2px 2px 0 0; line-height: 20px; }
.context-tabs { display: grid; grid-template-columns: 59px 59px 58px; background: linear-gradient(#6ea56e, #c9dcc9 50%, #ececee); border: solid #c9d8c9; border-width: 0 1px; }
.mdi { display: flex; justify-content: flex-end; align-items: center; gap: 5px; padding-right: 2px; }

.ribbon { height: 82px; display: flex; background: linear-gradient(#fff 0, #fff 50%, #e9ebf0); border-top: 1px solid #c4c6ca; border-bottom: 1px solid #9599a3; }
.group { display: flex; flex-direction: column; border-right: 1px solid #c3c6cd; }
.group h2 { height: 14px; line-height: 14px; text-align: center; color: #60646d; position: relative; }
.group .body { flex: 1; display: flex; min-height: 0; }
.group .launch { position: absolute; right: 4px; bottom: 2px; width: 8px; height: 8px; }
.clipboard { width: 143px; } .font { width: 197px; } .align { width: 245px; } .number { width: 134px; }
.styles { width: 166px; } .cells { width: 127px; } .editing { width: 168px; }
.big { display: flex; flex-direction: column; align-items: center; padding-top: 5px; line-height: 12px; text-align: center; white-space: nowrap; }
.big svg { width: 28px; height: 30px; margin-bottom: 3px; }
.big > .arr { margin-top: 5px; }
.off { color: #a2a4a8; }
.clipboard .big { width: 45px; }
.clipboard .big > .arr { border-top-color: #b5b5b5; }
.stack { display: flex; flex-direction: column; padding-top: 2px; }
.stack button { height: 21px; display: flex; align-items: center; gap: 2px; white-space: nowrap; }
.body.rows, .rows { display: flex; flex-direction: column; gap: 6px; padding-top: 9px; }
.row { display: flex; align-items: center; height: 22px; }
.rows { min-width: 0; }
.font .rows, .number .rows { padding-left: 4px; }
.combo { height: 20px; background: #fff; border: 1px solid #c5c8ce; display: flex; align-items: center; justify-content: space-between; padding: 0 4px 0 2px; white-space: nowrap; }
.fname { width: 106px; color: #222; } .fsize { width: 41px; color: #222; border-left: 0; } .format { width: 127px; }
.tool { width: 22px; height: 22px; display: grid; place-items: center; }
.serif { font: 700 14px/16px "Liberation Serif", serif; color: #222; }
.under { text-decoration: underline; }
.big-a { font-size: 18px; } .small-a { font-size: 14px; }
.grow, .shrink { display: flex; justify-content: center; align-items: center; }
.grow { margin-left: 3px; }
.tick { width: 5px; height: 4px; align-self: flex-start; margin-top: 4px; }
.sep { width: 1px; height: 16px; background: #d3d5da; margin: 0 6px; flex: none; }
.font .sep { margin: 0 7px; }
.align .body { padding-left: 5px; }
.align .sep { margin: 0 5px 0 4px; }
.align .sep.tall { height: 46px; margin: 8px 6px 0 7px; }
.align .rows { width: 113px; }
.align .sep.tall + .rows { width: 110px; }
.wide-tool { gap: 2px; white-space: nowrap; }
.number .sep { margin: 0 3px; }
.number .pct { font-size: 13px; color: #666; margin-left: 3px; }
.number .comma { font: 700 20px/10px "Liberation Serif", serif; color: #666; align-items: start; }
.w68 { width: 68px; } .w52 { width: 52px; } .w44 { width: 44px; } .w40 { width: 40px; }
.styles .body { padding-left: 1px; }
.cells .body { padding-left: 3px; }
.cells { color: #222; }
.editing .body { padding-left: 7px; color: #222; }
.editing .stack { width: 74px; }

.formula { height: 21px; margin: 3px 0 4px; display: flex; background: #fff; border-bottom: 1px solid #9599a3; outline: 2px solid #dfe1e6; }
.namebox { width: 150px; display: flex; align-items: center; padding-right: 4px; color: #222; }
.namebox span { flex: 1; text-align: center; padding-right: 8px; font-size: 12px; }
.fx { width: 82px; background: #dcdfe7; border-radius: 10px 0 0 10px; border: 1px solid #b5b9c2; display: flex; justify-content: space-between; align-items: center; padding: 0 6px 0 4px; }
.knob { width: 8px; height: 5px; border-radius: 3px; background: #b5b7bd; }
.fx em { font: italic 700 14px/14px "Liberation Serif", serif; color: #222; }
.fx small { font-size: 10px; }
.finput { flex: 1; min-width: 0; border: 0; }
.expand { width: 15px; background: #dcdfe7; border: 1px solid #b5b9c2; display: grid; place-items: center; }
.expand svg { width: 10px; height: 8px; }

.work { flex: 1; min-height: 0; display: flex; }
.sheet { flex: 1; min-width: 0; position: relative; overflow: hidden; background: #fff; }
table { width: 100%; table-layout: fixed; border-spacing: 0; border-collapse: separate; }
tr { height: 19px; } .t18 { height: 18px; } .t26 { height: 26px; } .t27 { height: 27px; }
th, td { padding: 0; border-right: 1px solid #d9dbdf; border-bottom: 1px solid #d9dbdf; overflow: hidden; white-space: nowrap; }
th { background: #dfe2ea; border-color: #b5b9c2; font-weight: 400; font-size: 12px; line-height: 16px; color: #3b3f47; }
thead th { border-top: 1px solid #9599a3; line-height: 17px; }
.corner svg { width: 12px; height: 12px; margin-left: auto; }
td { font: 18px/24px Lato, "Open Sans", sans-serif; color: #111; padding-left: 3px; }
td.n { text-align: right; padding: 0 3px 0 0; }
.c-head { width: 25px; } .c-a { width: 85px; } .c-b { width: 68px; } .c-c { width: 63px; } .c-d { width: 64px; }
.c-f { width: 60px; } .c-i { width: 61px; } .c-j { width: 99px; } .c-k { width: 104px; }

.float { position: absolute; font: 11px Lato, sans-serif; }
.ctitle { font: 700 21px Lato, sans-serif; }
.ranges { left: 22px; top: 40px; width: 350px; height: 62px; }
.chart-bars { left: 362px; top: 203px; width: 396px; height: 292px; }
.chart-pie { left: 66px; top: 213px; width: 454px; height: 272px; }
.chart-line { left: 777px; top: 279px; width: 476px; height: 205px; }
.chart-active { left: 418px; top: 132px; width: 464px; height: 283px; }

.vscroll { width: 15px; background: #dcdfe6; border-left: 1px solid #c3c6cd; display: flex; flex-direction: column; }
.vsplit { height: 8px; border: 1px solid #777; background: #fff; }
.vscroll button { height: 15px; display: grid; place-items: center; }
.vtrack { flex: 1; }
.vthumb { height: 92%; background: linear-gradient(90deg, #fdfdfe, #dfe2ea); border: 1px solid #8f949f; border-radius: 1px; display: grid; place-items: center; }
.vthumb .grip { width: 7px; height: 7px; background: repeating-linear-gradient(#777 0 1px, transparent 1px 2px); }

.bottom { height: 17px; display: flex; background: #dcdfe8; border-top: 1px solid #a9adb7; border-bottom: 1px solid #8f949f; padding-right: 15px; }
.sheetnav { width: 60px; display: flex; align-items: center; justify-content: space-around; border-right: 1px solid #b5b9c2; }
.sheetnav svg, .hscroll svg { width: 8px; height: 8px; }
.stab { font-size: 12px; line-height: 15px; width: 44px; color: #5c606a; text-align: center; }
.stab.on { width: 55px; background: #fff; font-weight: 600; color: #333; }
.stab.add { width: 28px; display: grid; place-items: center; }
.slash { width: 13px; background: linear-gradient(to bottom right, transparent 46%, #8f949f 47% 53%, transparent 54%); }
.slash.first { background: linear-gradient(to bottom right, #fff 46%, #8f949f 47% 53%, transparent 54%); }
.hscroll { margin-left: auto; width: 501px; display: flex; }
.hsplit { width: 6px; border: 1px solid #888; background: #fff; }
.hscroll button { width: 16px; display: grid; place-items: center; }
.htrack { flex: 1; }
.hthumb { width: 78%; height: 15px; border: 1px solid #9ba0ab; border-radius: 1px; background: linear-gradient(#fbfbfd, #dfe2ea); display: grid; place-items: center; }
.hthumb .grip { width: 8px; height: 7px; background: repeating-linear-gradient(90deg, #888 0 1px, transparent 1px 2px); }

.status { height: 21px; display: flex; align-items: center; background: linear-gradient(#e3e5e9, #b9bdc5); color: #3b3f47; white-space: nowrap; }
.cell { border-right: 1px solid #989ca5; line-height: 17px; }
.ready { width: 47px; padding-left: 8px; } .lock { width: 65px; padding-left: 8px; }
.stats { margin-left: auto; display: flex; gap: 14px; }
.stats span:first-child { margin-right: 25px; }
.bar2 { width: 2px; height: 15px; border: 1px solid #999; border-width: 0 1px; margin: 0 4px 0 9px; }
.views { display: flex; }
.views button { width: 18px; height: 18px; display: grid; place-items: center; }
.views .on { background: #fbd96b; border: 1px solid #b9902a; border-radius: 2px; }
.pct100 { margin: 0 6px 0 6px; }
.round, .round svg { width: 16px; height: 16px; }
.zoom { appearance: none; width: 85px; margin: 0 4px; height: 14px; background: linear-gradient(#999, #999) center / 100% 1px no-repeat; }
.zoom::-webkit-slider-thumb { appearance: none; width: 9px; height: 12px; background: #f4f5f7; border: 1px solid #666; border-radius: 1px 1px 5px 5px; }
.sizer { width: 10px; height: 10px; margin: 6px 2px 0 6px; }

.genuine { height: 7px; overflow: hidden; display: flex; justify-content: flex-end; }
.genuine p { line-height: 14px; margin-top: -5px; padding-right: 4px; color: #b9b9b9; }

.logo { position: absolute; top: 0; right: 74px; width: 90px; height: 84px; background: #000; color: #fff; display: flex; flex-direction: column; align-items: center; padding-top: 12px; gap: 1px; font-weight: 600; font-size: 12px; }
.logo svg { width: 36px; height: 40px; }
```
